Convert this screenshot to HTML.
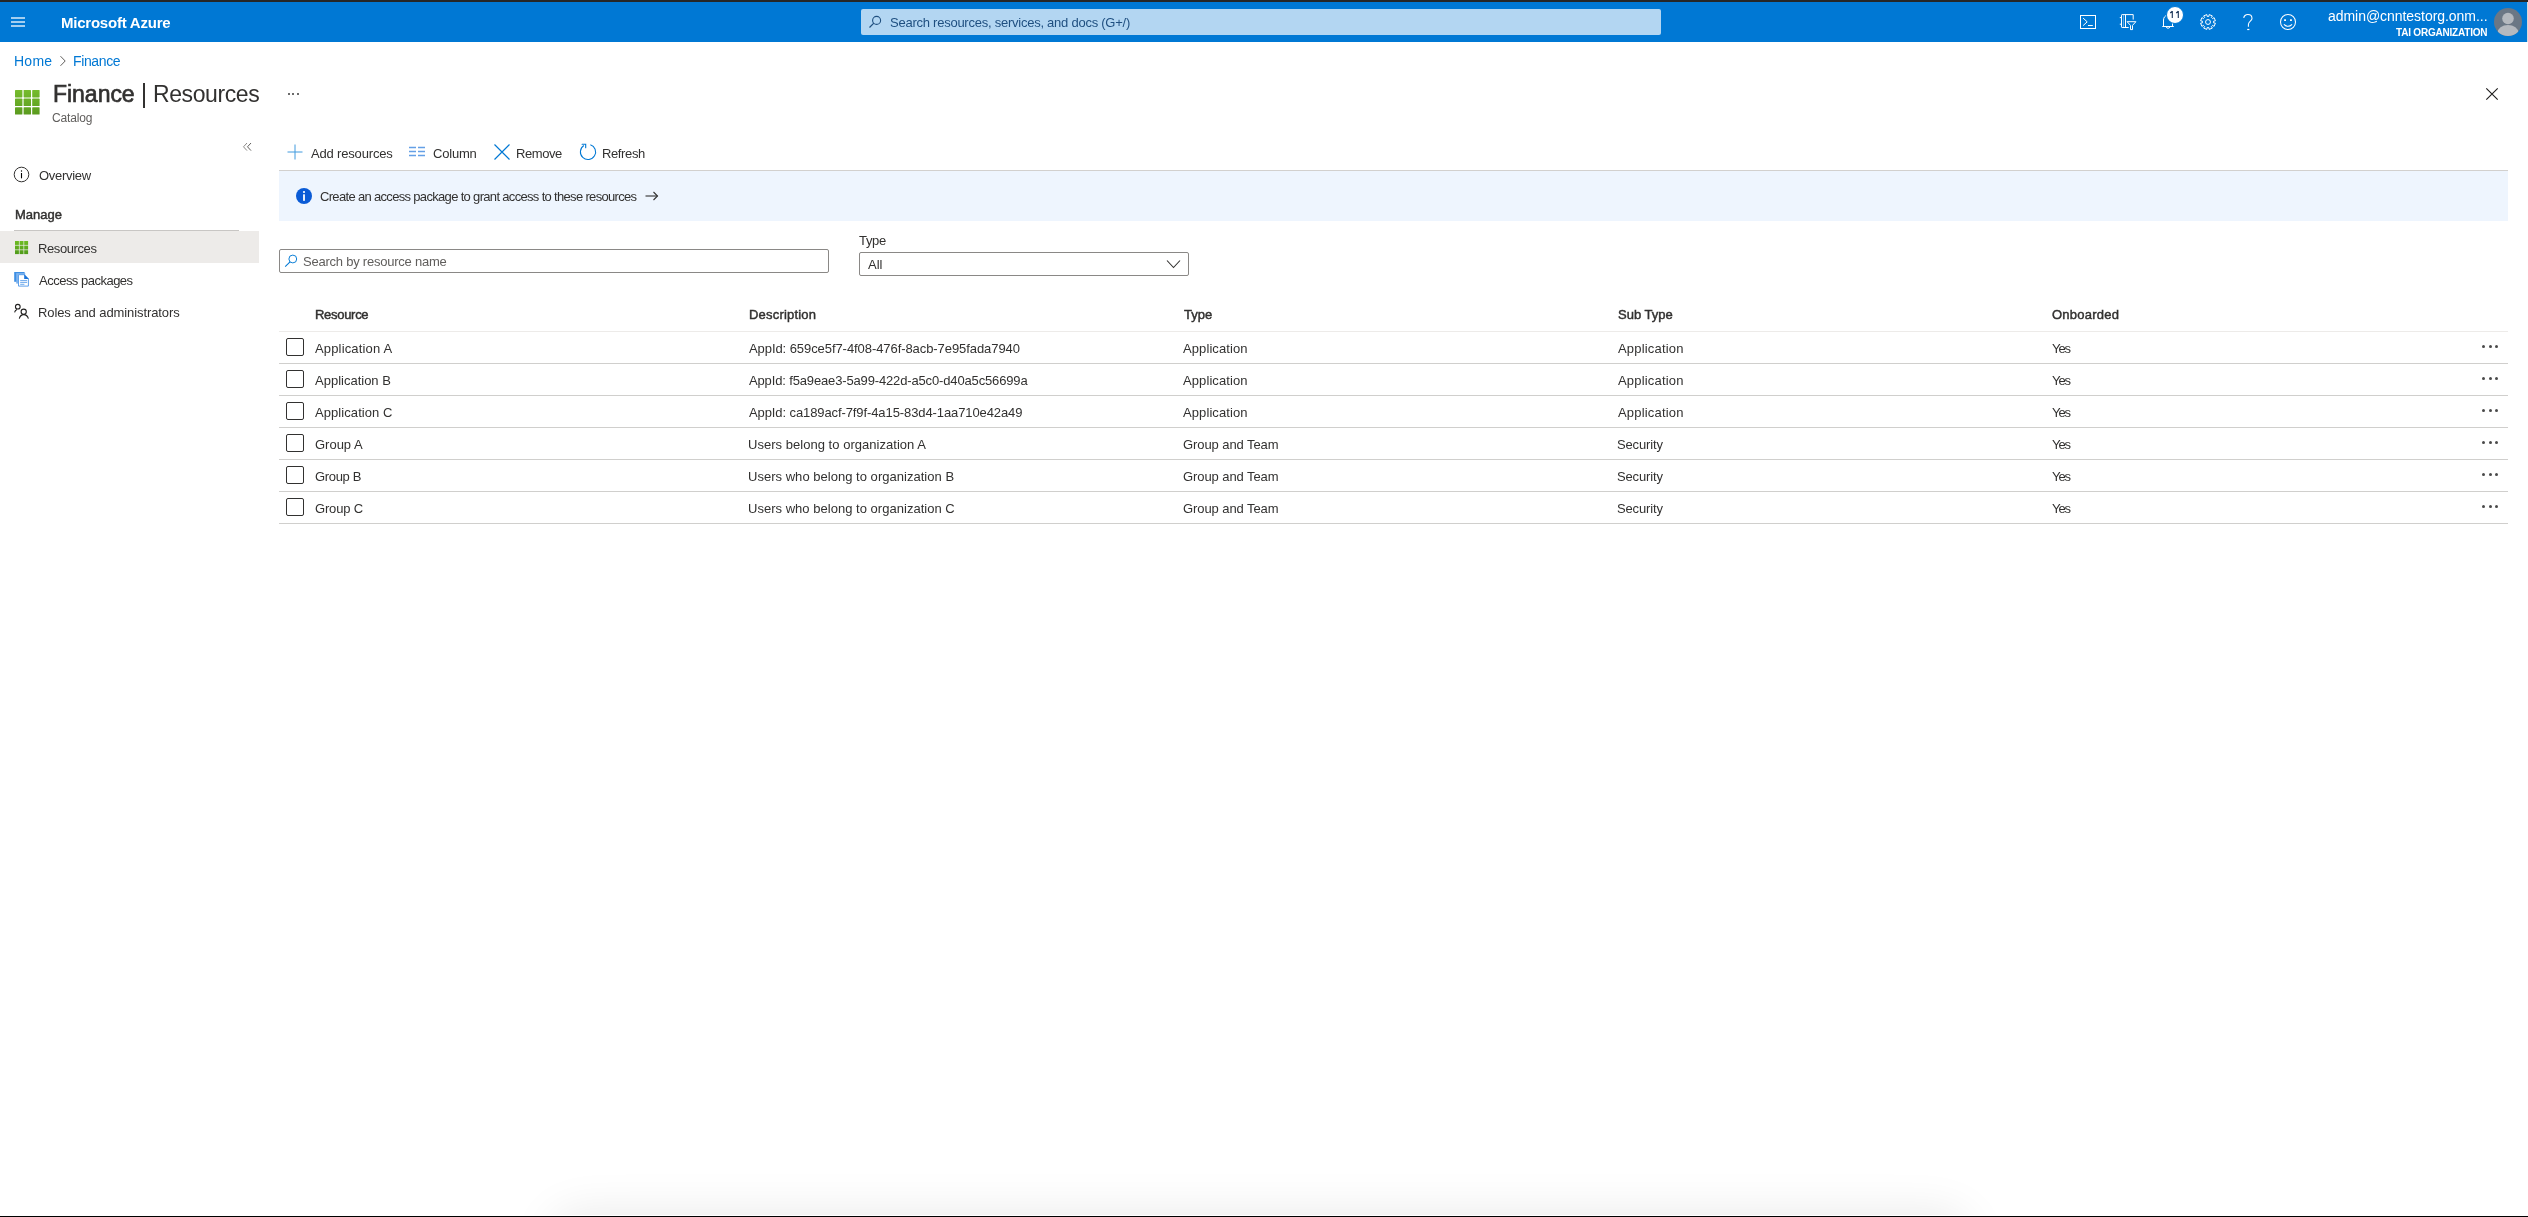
<!DOCTYPE html>
<html><head><meta charset="utf-8"><style>
html,body{margin:0;padding:0;width:2528px;height:1217px;overflow:hidden;background:#fff;position:relative;font-family:"Liberation Sans",sans-serif;}
.t{position:absolute;white-space:nowrap;will-change:transform;}
svg{display:block;}
</style></head><body>
<div style="position:absolute;left:0;top:0;width:2528px;height:2px;background:#262626"></div>
<div style="position:absolute;left:0;top:2px;width:2528px;height:40px;background:#0078d4"></div>
<div style="position:absolute;left:11px;top:17px;width:14px;height:2px;background:rgba(255,255,255,0.64)"></div>
<div style="position:absolute;left:11px;top:21px;width:14px;height:2px;background:rgba(255,255,255,0.64)"></div>
<div style="position:absolute;left:11px;top:25px;width:14px;height:2px;background:rgba(255,255,255,0.64)"></div>
<div class="t" style="left:61.15px;top:14.00px;font-size:15px;line-height:17px;color:#ffffff;letter-spacing:-0.229px;font-weight:700;">Microsoft Azure</div>
<div style="position:absolute;left:861px;top:9px;width:800px;height:26px;background:#b3d6f2;border-radius:2px"></div>
<svg style="position:absolute;left:868px;top:15px" width="14" height="14" viewBox="0 0 14 14"><circle cx="8.6" cy="5.4" r="4" fill="none" stroke="#1f4f7f" stroke-width="1.1"/><line x1="5.8" y1="8.2" x2="1.5" y2="12.5" stroke="#1f4f7f" stroke-width="1.2"/></svg>
<div class="t" style="left:890.13px;top:15.00px;font-size:13px;line-height:15px;color:#1f4f80;letter-spacing:-0.246px;">Search resources, services, and docs (G+/)</div>
<svg style="position:absolute;left:2079px;top:14px" width="18" height="16" viewBox="0 0 18 16"><rect x="1.5" y="1.5" width="15" height="13" fill="none" stroke="#fff" stroke-width="1"/><polyline points="4.1,4.1 8.2,7.85 4.1,11.6" fill="none" stroke="#fff" stroke-width="1"/><line x1="9" y1="11.5" x2="13.8" y2="11.5" stroke="#fff" stroke-width="1"/></svg>
<svg style="position:absolute;left:2119px;top:13px" width="18" height="18" viewBox="0 0 18 18"><path d="M9.7 14.5 H3.1 Q2.5 14.5 2.5 13.9 V2.2 Q2.5 1.6 3.1 1.6 H14.2 V6.6" fill="none" stroke="#fff" stroke-width="1"/><path d="M6.5 1.6 V14.5" stroke="#fff" stroke-width="1"/><path d="M4.5 2 V14" stroke="#fff" stroke-width="0.8" opacity="0.45"/><path d="M0.8 4.6 H2.5 M0.8 11.2 H2.5" stroke="#fff" stroke-width="1"/><path d="M8.1 8.7 H16.9 L13.5 12.4 V16.6 H11.5 V12.4 Z" fill="none" stroke="#fff" stroke-width="1"/></svg>
<svg style="position:absolute;left:2160px;top:12px" width="18" height="18" viewBox="0 0 18 18"><path d="M2.3 14.5 H13.8" stroke="#fff" stroke-width="1"/><path d="M3.5 14.5 V8 C3.5 5.5 5 3.8 7 3.3 M12.5 14.5 V8 C12.5 5.5 11 3.8 9 3.3" fill="none" stroke="#fff" stroke-width="1"/><path d="M6.3 15 A1.8 1.6 0 0 0 9.8 15" fill="none" stroke="#fff" stroke-width="1"/></svg>
<div style="position:absolute;left:2166px;top:6px;width:16px;height:16px;border-radius:50%;background:#fff;border:1px solid #0078d4"></div>
<svg style="position:absolute;left:2169px;top:10px" width="12" height="9" viewBox="0 0 12 9"><path d="M3.3 1.1 V7.9 M3.3 1.3 L1.2 3 M9.3 1.1 V7.9 M9.3 1.3 L7.2 3" fill="none" stroke="#203a5c" stroke-width="1.15"/></svg>
<svg style="position:absolute;left:2199px;top:13px" width="18" height="18" viewBox="0 0 18 18"><path d="M9.89 3.37 L10.17 1.59 L13.41 2.93 L12.35 4.39 L13.61 5.65 L15.07 4.59 L16.41 7.83 L14.63 8.11 L14.63 9.89 L16.41 10.17 L15.07 13.41 L13.61 12.35 L12.35 13.61 L13.41 15.07 L10.17 16.41 L9.89 14.63 L8.11 14.63 L7.83 16.41 L4.59 15.07 L5.65 13.61 L4.39 12.35 L2.93 13.41 L1.59 10.17 L3.37 9.89 L3.37 8.11 L1.59 7.83 L2.93 4.59 L4.39 5.65 L5.65 4.39 L4.59 2.93 L7.83 1.59 L8.11 3.37 Z" fill="none" stroke="#fff" stroke-width="1" stroke-linejoin="round"/><circle cx="9" cy="9" r="2.45" fill="none" stroke="#fff" stroke-width="1"/></svg>
<svg style="position:absolute;left:2239px;top:13px" width="18" height="18" viewBox="0 0 18 18"><path d="M4.8 5.1 C4.8 2.9 6.6 1.5 8.9 1.5 C11.3 1.5 13 3.1 13 5.4 C13 7.9 9.4 8.6 9.4 11.5 V13.7" fill="none" stroke="#fff" stroke-width="1.05"/><rect x="8.2" y="15.9" width="2.2" height="1.2" fill="#fff"/></svg>
<svg style="position:absolute;left:2279px;top:13px" width="18" height="18" viewBox="0 0 18 18"><circle cx="9" cy="9" r="7.5" fill="none" stroke="#fff" stroke-width="1.05"/><rect x="5.1" y="6.3" width="1.9" height="1.7" fill="#fff"/><rect x="11" y="6.3" width="1.9" height="1.7" fill="#fff"/><path d="M4.9 11.3 Q9 15.3 13.1 11.3" fill="none" stroke="#fff" stroke-width="1.05"/></svg>
<div class="t" style="left:2328.02px;top:7.60px;font-size:14px;line-height:16px;color:#ffffff;letter-spacing:-0.045px;">admin@cnntestorg.onm...</div>
<div class="t" style="left:2396.01px;top:27.00px;font-size:10px;line-height:11px;color:#ffffff;letter-spacing:-0.207px;font-weight:700;">TAI ORGANIZATION</div>
<svg style="position:absolute;left:2494px;top:8px" width="28" height="28" viewBox="0 0 28 28"><defs><clipPath id="av"><circle cx="14" cy="14" r="14"/></clipPath></defs><circle cx="14" cy="14" r="14" fill="#6b7785"/><g clip-path="url(#av)"><circle cx="14" cy="10.5" r="5.8" fill="#b5b9bf"/><ellipse cx="14" cy="25" rx="10.5" ry="8" fill="#b5b9bf"/></g></svg>
<div style="position:absolute;left:2527px;top:2px;width:1px;height:40px;background:#d8d8d8"></div>
<div class="t" style="left:14.07px;top:53.00px;font-size:14px;line-height:16px;color:#0078d4;letter-spacing:0.253px;">Home</div>
<svg style="position:absolute;left:59px;top:55px" width="8" height="12" viewBox="0 0 8 12"><polyline points="1.5,1.2 6.2,6 1.5,10.8" fill="none" stroke="#605e5c" stroke-width="1"/></svg>
<div class="t" style="left:73.12px;top:53.00px;font-size:14px;line-height:16px;color:#0078d4;letter-spacing:-0.367px;">Finance</div>
<svg style="position:absolute;left:15px;top:90px" width="25" height="25" viewBox="0 0 25 25"><defs><linearGradient id="gg" x1="0" y1="0" x2="0" y2="25" gradientUnits="userSpaceOnUse"><stop offset="0" stop-color="#76bc2d"/><stop offset="1" stop-color="#5a9a1e"/></linearGradient></defs><rect x="0.0" y="0.0" width="7.4" height="7.4" rx="0.6" fill="url(#gg)"/><rect x="8.6" y="0.0" width="7.4" height="7.4" rx="0.6" fill="url(#gg)"/><rect x="17.2" y="0.0" width="7.4" height="7.4" rx="0.6" fill="url(#gg)"/><rect x="0.0" y="8.6" width="7.4" height="7.4" rx="0.6" fill="url(#gg)"/><rect x="8.6" y="8.6" width="7.4" height="7.4" rx="0.6" fill="url(#gg)"/><rect x="17.2" y="8.6" width="7.4" height="7.4" rx="0.6" fill="url(#gg)"/><rect x="0.0" y="17.2" width="7.4" height="7.4" rx="0.6" fill="url(#gg)"/><rect x="8.6" y="17.2" width="7.4" height="7.4" rx="0.6" fill="url(#gg)"/><rect x="17.2" y="17.2" width="7.4" height="7.4" rx="0.6" fill="url(#gg)"/></svg>
<div class="t" style="left:53.08px;top:81.00px;font-size:23px;line-height:26px;color:#323130;letter-spacing:-0.028px;-webkit-text-stroke:0.65px #323130;">Finance</div>
<div style="position:absolute;left:143.4px;top:83.4px;width:2px;height:24.5px;background:#323130"></div>
<div class="t" style="left:153.26px;top:81.00px;font-size:23px;line-height:26px;color:#323130;letter-spacing:-0.407px;">Resources</div>
<div style="position:absolute;left:287.80px;top:92.8px;width:2.2px;height:2.2px;border-radius:50%;background:#3a3a3a"></div>
<div style="position:absolute;left:292.20px;top:92.8px;width:2.2px;height:2.2px;border-radius:50%;background:#3a3a3a"></div>
<div style="position:absolute;left:296.50px;top:92.8px;width:2.2px;height:2.2px;border-radius:50%;background:#3a3a3a"></div>
<div class="t" style="left:52.04px;top:111.00px;font-size:12px;line-height:14px;color:#605e5c;letter-spacing:-0.170px;">Catalog</div>
<svg style="position:absolute;left:2485px;top:87px" width="14" height="14" viewBox="0 0 14 14"><path d="M1.3 1.3 L12.7 12.7 M12.7 1.3 L1.3 12.7" stroke="#201f1e" stroke-width="1.15"/></svg>
<svg style="position:absolute;left:242px;top:142px" width="10" height="10" viewBox="0 0 10 10"><polyline points="5,1 1.5,4.8 5,8.6" fill="none" stroke="#8a8886" stroke-width="1"/><polyline points="9,1 5.5,4.8 9,8.6" fill="none" stroke="#605e5c" stroke-width="1"/></svg>
<svg style="position:absolute;left:13px;top:166px" width="17" height="17" viewBox="0 0 17 17"><circle cx="8.5" cy="8.5" r="7.3" fill="none" stroke="#323130" stroke-width="1"/><line x1="8.5" y1="7" x2="8.5" y2="12.3" stroke="#000" stroke-width="1.1"/><circle cx="8.5" cy="5" r="0.7" fill="#000"/></svg>
<div class="t" style="left:39.04px;top:168.00px;font-size:13px;line-height:15px;color:#323130;letter-spacing:-0.296px;">Overview</div>
<div class="t" style="left:14.98px;top:207.00px;font-size:13px;line-height:15px;color:#323130;letter-spacing:-0.006px;-webkit-text-stroke:0.45px #323130;">Manage</div>
<div style="position:absolute;left:14px;top:230px;width:225px;height:1px;background:#c8c6c4"></div>
<div style="position:absolute;left:0;top:231px;width:259px;height:32px;background:#edebe9"></div>
<svg style="position:absolute;left:15px;top:241px" width="13.5" height="13.5" viewBox="0 0 13.5 13.5"><defs><linearGradient id="gs" x1="0" y1="0" x2="0" y2="13.5" gradientUnits="userSpaceOnUse"><stop offset="0" stop-color="#6dbb22"/><stop offset="1" stop-color="#4f9a1a"/></linearGradient></defs><rect x="0.0" y="0.0" width="3.9" height="3.9" fill="url(#gs)"/><rect x="4.6" y="0.0" width="3.9" height="3.9" fill="url(#gs)"/><rect x="9.2" y="0.0" width="3.9" height="3.9" fill="url(#gs)"/><rect x="0.0" y="4.6" width="3.9" height="3.9" fill="url(#gs)"/><rect x="4.6" y="4.6" width="3.9" height="3.9" fill="url(#gs)"/><rect x="9.2" y="4.6" width="3.9" height="3.9" fill="url(#gs)"/><rect x="0.0" y="9.2" width="3.9" height="3.9" fill="url(#gs)"/><rect x="4.6" y="9.2" width="3.9" height="3.9" fill="url(#gs)"/><rect x="9.2" y="9.2" width="3.9" height="3.9" fill="url(#gs)"/></svg>
<div class="t" style="left:38.14px;top:241.00px;font-size:13px;line-height:15px;color:#323130;letter-spacing:-0.405px;">Resources</div>
<svg style="position:absolute;left:14px;top:272px" width="15" height="15" viewBox="0 0 15 15"><rect x="0.2" y="0" width="10.4" height="9.8" fill="#3d8fe4"/><rect x="2.2" y="1.1" width="9" height="10.5" fill="#7fb4ee"/><path d="M4.5 2.7 H10.2 L14.4 6.9 V14.1 H4.5 Z" fill="#ffffff" stroke="#5ea0ea" stroke-width="1"/><path d="M10.2 2.2 V6.9 H14.9 Z" fill="#1a73d9"/><path d="M6.2 8.6 H13.1 M6.2 10.4 H13.1 M6.2 12.3 H10.4" stroke="#5ea0ea" stroke-width="0.9"/></svg>
<div class="t" style="left:39.03px;top:273.00px;font-size:13px;line-height:15px;color:#323130;letter-spacing:-0.506px;">Access packages</div>
<svg style="position:absolute;left:14px;top:303px" width="16" height="16" viewBox="0 0 16 16"><circle cx="3.8" cy="3.7" r="2.35" fill="none" stroke="#201f1e" stroke-width="1.1"/><path d="M0.6 9.3 C0.9 7.7 1.8 6.8 3.0 6.4" fill="none" stroke="#201f1e" stroke-width="1.1"/><circle cx="9.7" cy="8.7" r="2.6" fill="none" stroke="#201f1e" stroke-width="1.1"/><path d="M5.3 15.6 C6 12.8 7.8 11.6 9.7 11.6 C11.6 11.6 13.6 12.8 14.4 15.6" fill="none" stroke="#201f1e" stroke-width="1.1"/></svg>
<div class="t" style="left:38.14px;top:305.00px;font-size:13px;line-height:15px;color:#323130;letter-spacing:-0.091px;">Roles and administrators</div>
<svg style="position:absolute;left:287px;top:144px" width="16" height="16" viewBox="0 0 16 16"><path d="M8 0.5 V15.5 M0.5 8 H15.5" stroke="#0078d4" stroke-width="1" opacity="0.75"/></svg>
<div class="t" style="left:311.02px;top:146.00px;font-size:13px;line-height:15px;color:#323130;letter-spacing:-0.171px;">Add resources</div>
<svg style="position:absolute;left:409px;top:146px" width="17" height="12" viewBox="0 0 17 12"><path d="M0 1.5 H7 M0 5.5 H7 M0 9.5 H7 M9 1.5 H16 M9 5.5 H16 M9 9.5 H16" stroke="#4a90e2" stroke-width="1.6" opacity="0.85"/></svg>
<div class="t" style="left:433.05px;top:146.00px;font-size:13px;line-height:15px;color:#323130;letter-spacing:-0.210px;">Column</div>
<svg style="position:absolute;left:494px;top:144px" width="16" height="16" viewBox="0 0 16 16"><path d="M0.5 0.5 L15.5 15.5 M15.5 0.5 L0.5 15.5" stroke="#0078d4" stroke-width="1.2"/></svg>
<div class="t" style="left:516.16px;top:146.00px;font-size:13px;line-height:15px;color:#323130;letter-spacing:-0.418px;">Remove</div>
<svg style="position:absolute;left:579px;top:143px" width="18" height="18" viewBox="0 0 18 18"><path d="M11.35 1.67 A7.6 7.6 0 1 1 4.86 2.53" fill="none" stroke="#0078d4" stroke-width="1.05"/><path d="M3.1 1.2 H6.7 V4.7" fill="none" stroke="#0078d4" stroke-width="1.1" stroke-linecap="round"/></svg>
<div class="t" style="left:602.14px;top:146.00px;font-size:13px;line-height:15px;color:#323130;letter-spacing:-0.375px;">Refresh</div>
<div style="position:absolute;left:279px;top:170px;width:2229px;height:1px;background:#d2d0ce"></div>
<div style="position:absolute;left:279px;top:171px;width:2229px;height:50px;background:#eef5fe"></div>
<svg style="position:absolute;left:296px;top:188px" width="16" height="16" viewBox="0 0 16 16"><circle cx="8" cy="8" r="8" fill="#0a5bd6"/><circle cx="8" cy="4" r="1.1" fill="#fff"/><rect x="7.1" y="6.3" width="1.8" height="6.5" fill="#fff"/></svg>
<div class="t" style="left:320.04px;top:189.20px;font-size:13px;line-height:15px;color:#323130;letter-spacing:-0.675px;">Create an access package to grant access to these resources</div>
<svg style="position:absolute;left:645px;top:191px" width="14" height="10" viewBox="0 0 14 10"><path d="M0.5 5 H12.5" stroke="#323130" stroke-width="1.1"/><path d="M8.5 1 L12.5 5 L8.5 9" fill="none" stroke="#323130" stroke-width="1.1"/></svg>
<div style="position:absolute;left:279px;top:249px;width:548px;height:22px;border:1px solid #8a8886;border-radius:2px;background:#fff"></div>
<svg style="position:absolute;left:284px;top:254px" width="14" height="14" viewBox="0 0 14 14"><circle cx="8.8" cy="5" r="3.9" fill="none" stroke="#0078d4" stroke-width="0.95"/><line x1="6" y1="7.8" x2="1.2" y2="12.6" stroke="#0078d4" stroke-width="1.05"/></svg>
<div class="t" style="left:303.14px;top:254.00px;font-size:13px;line-height:15px;color:#605e5c;letter-spacing:-0.234px;">Search by resource name</div>
<div class="t" style="left:859.04px;top:233.00px;font-size:13px;line-height:15px;color:#323130;letter-spacing:-0.347px;">Type</div>
<div style="position:absolute;left:859px;top:252px;width:328px;height:22px;border:1px solid #8a8886;border-radius:2px;background:#fff"></div>
<div class="t" style="left:868.00px;top:257.00px;font-size:13px;line-height:15px;color:#323130;letter-spacing:-0.040px;">All</div>
<svg style="position:absolute;left:1166px;top:259px" width="16" height="10" viewBox="0 0 16 10"><polyline points="1,1.5 7.5,8.5 14,1.5" fill="none" stroke="#323130" stroke-width="1.1"/></svg>
<div class="t" style="left:315.04px;top:306.60px;font-size:13px;line-height:15px;color:#323130;letter-spacing:-0.297px;-webkit-text-stroke:0.45px #323130;">Resource</div>
<div class="t" style="left:749.05px;top:306.60px;font-size:13px;line-height:15px;color:#323130;letter-spacing:0.195px;-webkit-text-stroke:0.45px #323130;">Description</div>
<div class="t" style="left:1183.96px;top:306.60px;font-size:13px;line-height:15px;color:#323130;letter-spacing:-0.013px;-webkit-text-stroke:0.45px #323130;">Type</div>
<div class="t" style="left:1618.01px;top:306.60px;font-size:13px;line-height:15px;color:#323130;letter-spacing:-0.011px;-webkit-text-stroke:0.45px #323130;">Sub Type</div>
<div class="t" style="left:2052.02px;top:306.60px;font-size:13px;line-height:15px;color:#323130;letter-spacing:0.240px;-webkit-text-stroke:0.45px #323130;">Onboarded</div>
<div style="position:absolute;left:279px;top:331px;width:2229px;height:1px;background:#edebe9"></div>
<div style="position:absolute;left:286px;top:338px;width:16px;height:16px;border:1px solid #323130;border-radius:2px"></div>
<div class="t" style="left:315.00px;top:341.00px;font-size:13px;line-height:15px;color:#323130;letter-spacing:0.158px;">Application A</div>
<div class="t" style="left:749.05px;top:341.00px;font-size:13px;line-height:15px;color:#323130;letter-spacing:-0.071px;">AppId: 659ce5f7-4f08-476f-8acb-7e95fada7940</div>
<div class="t" style="left:1183.05px;top:341.00px;font-size:13px;line-height:15px;color:#323130;letter-spacing:0.093px;">Application</div>
<div class="t" style="left:1618.00px;top:341.00px;font-size:13px;line-height:15px;color:#323130;letter-spacing:0.185px;">Application</div>
<div class="t" style="left:2052.00px;top:341.00px;font-size:13px;line-height:15px;color:#323130;letter-spacing:-1.050px;">Yes</div>
<div style="position:absolute;left:2482px;top:345.1px;width:3px;height:3px;border-radius:50%;background:#4a4a4a"></div>
<div style="position:absolute;left:2488.5px;top:345.1px;width:3px;height:3px;border-radius:50%;background:#4a4a4a"></div>
<div style="position:absolute;left:2495px;top:345.1px;width:3px;height:3px;border-radius:50%;background:#4a4a4a"></div>
<div style="position:absolute;left:279px;top:363px;width:2229px;height:1px;background:#d0cfcd"></div>
<div style="position:absolute;left:286px;top:370px;width:16px;height:16px;border:1px solid #323130;border-radius:2px"></div>
<div class="t" style="left:315.00px;top:373.00px;font-size:13px;line-height:15px;color:#323130;">Application B</div>
<div class="t" style="left:749.05px;top:373.00px;font-size:13px;line-height:15px;color:#323130;letter-spacing:-0.146px;">AppId: f5a9eae3-5a99-422d-a5c0-d40a5c56699a</div>
<div class="t" style="left:1183.05px;top:373.00px;font-size:13px;line-height:15px;color:#323130;letter-spacing:0.093px;">Application</div>
<div class="t" style="left:1618.00px;top:373.00px;font-size:13px;line-height:15px;color:#323130;letter-spacing:0.185px;">Application</div>
<div class="t" style="left:2052.00px;top:373.00px;font-size:13px;line-height:15px;color:#323130;letter-spacing:-1.050px;">Yes</div>
<div style="position:absolute;left:2482px;top:377.1px;width:3px;height:3px;border-radius:50%;background:#4a4a4a"></div>
<div style="position:absolute;left:2488.5px;top:377.1px;width:3px;height:3px;border-radius:50%;background:#4a4a4a"></div>
<div style="position:absolute;left:2495px;top:377.1px;width:3px;height:3px;border-radius:50%;background:#4a4a4a"></div>
<div style="position:absolute;left:279px;top:395px;width:2229px;height:1px;background:#d0cfcd"></div>
<div style="position:absolute;left:286px;top:402px;width:16px;height:16px;border:1px solid #323130;border-radius:2px"></div>
<div class="t" style="left:315.00px;top:405.00px;font-size:13px;line-height:15px;color:#323130;letter-spacing:0.075px;">Application C</div>
<div class="t" style="left:749.05px;top:405.00px;font-size:13px;line-height:15px;color:#323130;letter-spacing:-0.098px;">AppId: ca189acf-7f9f-4a15-83d4-1aa710e42a49</div>
<div class="t" style="left:1183.05px;top:405.00px;font-size:13px;line-height:15px;color:#323130;letter-spacing:0.093px;">Application</div>
<div class="t" style="left:1618.00px;top:405.00px;font-size:13px;line-height:15px;color:#323130;letter-spacing:0.185px;">Application</div>
<div class="t" style="left:2052.00px;top:405.00px;font-size:13px;line-height:15px;color:#323130;letter-spacing:-1.050px;">Yes</div>
<div style="position:absolute;left:2482px;top:409.1px;width:3px;height:3px;border-radius:50%;background:#4a4a4a"></div>
<div style="position:absolute;left:2488.5px;top:409.1px;width:3px;height:3px;border-radius:50%;background:#4a4a4a"></div>
<div style="position:absolute;left:2495px;top:409.1px;width:3px;height:3px;border-radius:50%;background:#4a4a4a"></div>
<div style="position:absolute;left:279px;top:427px;width:2229px;height:1px;background:#d0cfcd"></div>
<div style="position:absolute;left:286px;top:434px;width:16px;height:16px;border:1px solid #323130;border-radius:2px"></div>
<div class="t" style="left:315.00px;top:437.00px;font-size:13px;line-height:15px;color:#323130;letter-spacing:-0.008px;">Group A</div>
<div class="t" style="left:748.15px;top:437.00px;font-size:13px;line-height:15px;color:#323130;letter-spacing:0.032px;">Users belong to organization A</div>
<div class="t" style="left:1183.05px;top:437.00px;font-size:13px;line-height:15px;color:#323130;letter-spacing:-0.082px;">Group and Team</div>
<div class="t" style="left:1617.10px;top:437.00px;font-size:13px;line-height:15px;color:#323130;letter-spacing:-0.154px;">Security</div>
<div class="t" style="left:2052.00px;top:437.00px;font-size:13px;line-height:15px;color:#323130;letter-spacing:-1.050px;">Yes</div>
<div style="position:absolute;left:2482px;top:441.1px;width:3px;height:3px;border-radius:50%;background:#4a4a4a"></div>
<div style="position:absolute;left:2488.5px;top:441.1px;width:3px;height:3px;border-radius:50%;background:#4a4a4a"></div>
<div style="position:absolute;left:2495px;top:441.1px;width:3px;height:3px;border-radius:50%;background:#4a4a4a"></div>
<div style="position:absolute;left:279px;top:459px;width:2229px;height:1px;background:#d0cfcd"></div>
<div style="position:absolute;left:286px;top:466px;width:16px;height:16px;border:1px solid #323130;border-radius:2px"></div>
<div class="t" style="left:315.00px;top:469.00px;font-size:13px;line-height:15px;color:#323130;letter-spacing:-0.325px;">Group B</div>
<div class="t" style="left:748.15px;top:469.00px;font-size:13px;line-height:15px;color:#323130;letter-spacing:0.025px;">Users who belong to organization B</div>
<div class="t" style="left:1183.05px;top:469.00px;font-size:13px;line-height:15px;color:#323130;letter-spacing:-0.082px;">Group and Team</div>
<div class="t" style="left:1617.10px;top:469.00px;font-size:13px;line-height:15px;color:#323130;letter-spacing:-0.154px;">Security</div>
<div class="t" style="left:2052.00px;top:469.00px;font-size:13px;line-height:15px;color:#323130;letter-spacing:-1.050px;">Yes</div>
<div style="position:absolute;left:2482px;top:473.1px;width:3px;height:3px;border-radius:50%;background:#4a4a4a"></div>
<div style="position:absolute;left:2488.5px;top:473.1px;width:3px;height:3px;border-radius:50%;background:#4a4a4a"></div>
<div style="position:absolute;left:2495px;top:473.1px;width:3px;height:3px;border-radius:50%;background:#4a4a4a"></div>
<div style="position:absolute;left:279px;top:491px;width:2229px;height:1px;background:#d0cfcd"></div>
<div style="position:absolute;left:286px;top:498px;width:16px;height:16px;border:1px solid #323130;border-radius:2px"></div>
<div class="t" style="left:315.00px;top:501.00px;font-size:13px;line-height:15px;color:#323130;letter-spacing:-0.178px;">Group C</div>
<div class="t" style="left:748.15px;top:501.00px;font-size:13px;line-height:15px;color:#323130;letter-spacing:0.024px;">Users who belong to organization C</div>
<div class="t" style="left:1183.05px;top:501.00px;font-size:13px;line-height:15px;color:#323130;letter-spacing:-0.082px;">Group and Team</div>
<div class="t" style="left:1617.10px;top:501.00px;font-size:13px;line-height:15px;color:#323130;letter-spacing:-0.154px;">Security</div>
<div class="t" style="left:2052.00px;top:501.00px;font-size:13px;line-height:15px;color:#323130;letter-spacing:-1.050px;">Yes</div>
<div style="position:absolute;left:2482px;top:505.1px;width:3px;height:3px;border-radius:50%;background:#4a4a4a"></div>
<div style="position:absolute;left:2488.5px;top:505.1px;width:3px;height:3px;border-radius:50%;background:#4a4a4a"></div>
<div style="position:absolute;left:2495px;top:505.1px;width:3px;height:3px;border-radius:50%;background:#4a4a4a"></div>
<div style="position:absolute;left:279px;top:523px;width:2229px;height:1px;background:#d0cfcd"></div>
<div style="position:absolute;left:560px;top:1222px;width:1400px;height:40px;border-radius:30px;box-shadow:0 0 46px 10px rgba(0,0,0,0.085)"></div>
<div style="position:absolute;left:0;top:1215px;width:2528px;height:1px;background:#fff"></div>
<div style="position:absolute;left:0;top:1216px;width:2528px;height:1px;background:#000"></div>
</body></html>
